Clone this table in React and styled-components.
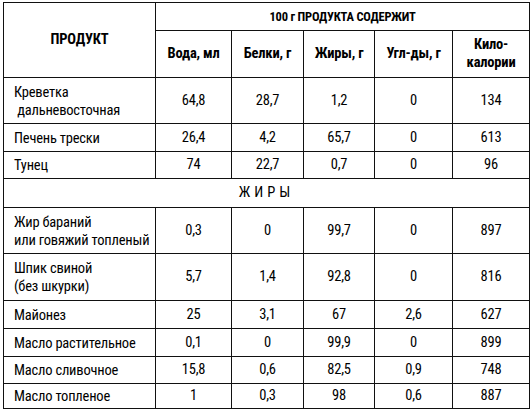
import React from 'react'
import styled, { createGlobalStyle } from 'styled-components'

const GlobalStyle = createGlobalStyle`
	html, body {
		margin: 0;
		padding: 0;
		background: #fff;
	}
	body {
		font-family: Roboto, "Liberation Sans", sans-serif;
		font-stretch: 75%;
		color: #000;
	}
`

const Page = styled.div`
	padding: 2px 0 0 3px;
`

const Table = styled.table`
	border-collapse: collapse;
	table-layout: fixed;
	width: 527px;
	font-size: 14.5px;
	letter-spacing: -0.2px;

	td, th {
		border: 1.5px solid #111;
		padding: 0;
		text-align: center;
		vertical-align: middle;
	}
`

const HeadCell = styled.th`
	font-weight: bold;
	font-size: ${p => p.small ? '12.5px' : '14.5px'};
	line-height: 18px;
`

const Row = styled.tr`
	height: ${p => p.h}px;
`

const NameCell = styled.td`
	&& {
		text-align: left;
		padding-left: 10px;
		padding-top: 2px;
	}
	line-height: 18px;
	white-space: nowrap;
`

const Value = styled.td`
	line-height: 18px;
`

const SectionCell = styled.td`
	&& {
		letter-spacing: 4px;
	}
	line-height: 18px;
`

const cols = [152, 76, 72, 71, 78, 77]

const fish = [
	{ name: ['Креветка', '\u00a0дальневосточная'], v: ['64,8', '28,7', '1,2', '0', '134'], h: 46 },
	{ name: ['Печень трески'], v: ['26,4', '4,2', '65,7', '0', '613'], h: 28 },
	{ name: ['Тунец'], v: ['74', '22,7', '0,7', '0', '96'], h: 27 },
]

const fats = [
	{ name: ['Жир бараний', 'или говяжий топленый'], v: ['0,3', '0', '99,7', '0', '897'], h: 46 },
	{ name: ['Шпик свиной', '(без шкурки)'], v: ['5,7', '1,4', '92,8', '0', '816'], h: 47 },
	{ name: ['Майонез'], v: ['25', '3,1', '67', '2,6', '627'], h: 28 },
	{ name: ['Масло растительное'], v: ['0,1', '0', '99,9', '0', '899'], h: 28 },
	{ name: ['Масло сливочное'], v: ['15,8', '0,6', '82,5', '0,9', '748'], h: 27 },
	{ name: ['Масло топленое'], v: ['1', '0,3', '98', '0,6', '887'], h: 25 },
]

function ProductRow({ item }) {
	return (
		<Row h={item.h}>
			<NameCell>
				{item.name.map((line, i) => (
					<React.Fragment key={i}>
						{i > 0 && <br />}
						{line}
					</React.Fragment>
				))}
			</NameCell>
			{item.v.map((val, i) => <Value key={i}>{val}</Value>)}
		</Row>
	)
}

export default function App() {
	return (
		<Page>
			<GlobalStyle />
			<Table>
				<colgroup>
					{cols.map((w, i) => <col key={i} style={{ width: w }} />)}
				</colgroup>
				<thead>
					<Row h={28}>
						<HeadCell rowSpan={2}>ПРОДУКТ</HeadCell>
						<HeadCell colSpan={5} small>100 г ПРОДУКТА СОДЕРЖИТ</HeadCell>
					</Row>
					<Row h={47}>
						<HeadCell>Вода, мл</HeadCell>
						<HeadCell>Белки, г</HeadCell>
						<HeadCell>Жиры, г</HeadCell>
						<HeadCell>Угл-ды, г</HeadCell>
						<HeadCell>Кило-<br />калории</HeadCell>
					</Row>
				</thead>
				<tbody>
					{fish.map((item, i) => <ProductRow key={i} item={item} />)}
					<Row h={29}>
						<SectionCell colSpan={6}>ЖИРЫ</SectionCell>
					</Row>
					{fats.map((item, i) => <ProductRow key={i} item={item} />)}
				</tbody>
			</Table>
		</Page>
	)
}
